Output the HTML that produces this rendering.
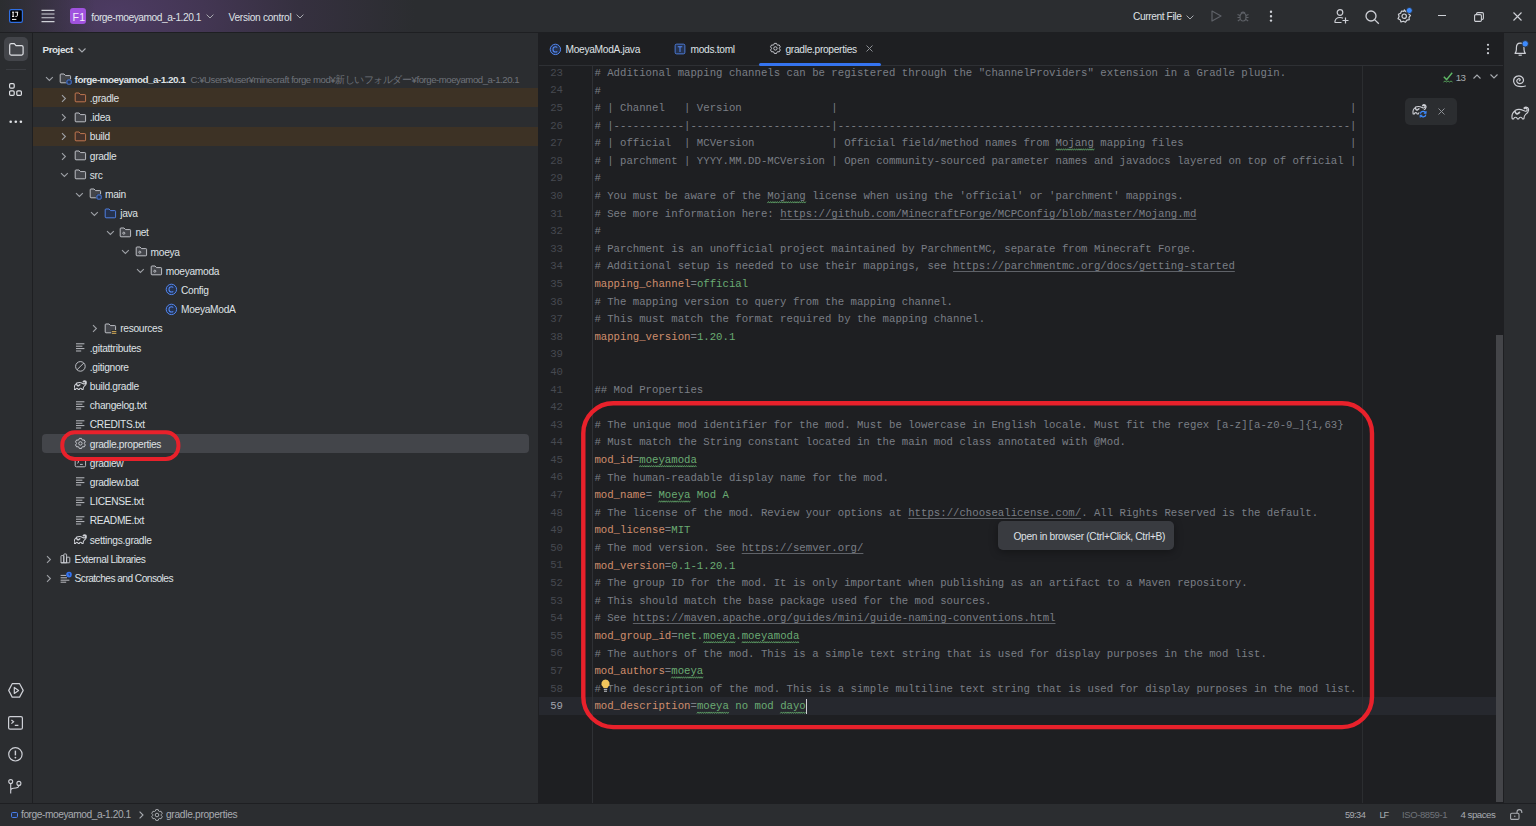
<!DOCTYPE html>
<html><head><meta charset="utf-8">
<style>
*{box-sizing:border-box;margin:0;padding:0}
html,body{width:1536px;height:826px;overflow:hidden;background:#2B2D30}
body{position:relative;font-family:"Liberation Sans",sans-serif;color:#DFE1E5}
.a{position:absolute}
.ui{font-size:10.2px;letter-spacing:-0.3px;white-space:nowrap;line-height:12px}
svg{position:absolute;overflow:visible}
#top{left:0;top:0;width:1536px;height:32px;background:linear-gradient(90deg,#2B2D30 0px,rgba(43,45,48,0) 95px),radial-gradient(ellipse 300px 180px at 115px 14px,#4D3B63 0%,#433653 30%,#35303F 62%,#2B2D30 100%)}
#lstripe{left:0;top:33px;width:33px;height:770px;background:#2B2D30;border-right:1px solid #1E1F22}
#proj{left:33px;top:33px;width:505px;height:770px;background:#2B2D30}
#div1{left:538px;top:32px;width:1px;height:771px;background:#1E1F22}
#editor{left:539px;top:32px;width:965px;height:771px;background:#1E1F22;overflow:hidden}
#rstripe{left:1503px;top:33px;width:33px;height:770px;background:#2B2D30;border-left:1px solid #1E1F22}
#status{left:0;top:803px;width:1536px;height:23px;background:#2B2D30;border-top:1px solid #1E1F22}
.row{position:absolute;left:0;width:505px;height:19.2px}
.code{position:absolute;left:55px;font-family:"Liberation Mono",monospace;font-size:10.68px;line-height:17.6px;white-space:pre;color:#7A7E85}
.ln{position:absolute;left:0;width:24px;text-align:right;font-family:"Liberation Mono",monospace;font-size:10.67px;line-height:17.6px;color:#464950}
.k{color:#CF8E6D}.v{color:#6AAB73}.eq{color:#7A7E85}
.u{text-decoration:underline #5F6268;text-underline-offset:2px;text-decoration-skip-ink:none}
.t{}
</style></head>
<body>
<svg width="0" height="0" style="position:absolute;left:0;top:0"><defs>
<path id="gear" d="M4.20 2.21 L4.80 0.63 L7.20 0.63 L7.80 2.21 L8.38 2.54 L10.05 2.28 L11.25 4.36 L10.19 5.66 L10.19 6.34 L11.25 7.64 L10.05 9.72 L8.38 9.46 L7.80 9.79 L7.20 11.37 L4.80 11.37 L4.20 9.79 L3.62 9.46 L1.95 9.72 L0.75 7.64 L1.81 6.34 L1.81 5.66 L0.75 4.36 L1.95 2.28 L3.62 2.54Z M7.8 6A1.8 1.8 0 1 1 4.2 6A1.8 1.8 0 1 1 7.8 6Z" fill="none" stroke-width="1" stroke-linejoin="round"/>
<path id="fpath" d="M1.5 3.5Q1.5 2.5 2.5 2.5H6.3L8.2 4.5H13.5Q14.5 4.5 14.5 5.5V12.5Q14.5 13.5 13.5 13.5H2.5Q1.5 13.5 1.5 12.5Z" stroke-linejoin="round"/>
<symbol id="i-folder" viewBox="0 0 16 16"><use href="#fpath" fill="#43454A" stroke="#CED0D6" stroke-width="1.1"/></symbol>
<symbol id="i-ofolder" viewBox="0 0 16 16"><use href="#fpath" fill="#45322A" stroke="#D08055" stroke-width="1.1"/></symbol>
<symbol id="i-srcfolder" viewBox="0 0 16 16"><use href="#fpath" fill="#25324D" stroke="#548AF7" stroke-width="1.1"/></symbol>
<symbol id="i-pkg" viewBox="0 0 16 16"><use href="#fpath" fill="#43454A" stroke="#CED0D6" stroke-width="1.1"/><circle cx="6" cy="9" r="1.3" fill="none" stroke="#CED0D6" stroke-width="1"/></symbol>
<symbol id="i-modfolder" viewBox="0 0 16 16"><use href="#fpath" fill="#43454A" stroke="#CED0D6" stroke-width="1.1"/><rect x="9.6" y="9.6" width="6" height="6" rx="1.4" fill="#25324D" stroke="#2B2D30" stroke-width="2"/><rect x="9.9" y="9.9" width="5.4" height="5.4" rx="1.2" fill="#25324D" stroke="#548AF7" stroke-width="1.2"/></symbol>
<symbol id="i-root" viewBox="0 0 16 16"><use href="#fpath" fill="#43454A" stroke="#CED0D6" stroke-width="1.1"/><rect x="9.6" y="9.6" width="6" height="6" rx="1.4" fill="#25324D" stroke="#2B2D30" stroke-width="2"/><rect x="9.9" y="9.9" width="5.4" height="5.4" rx="1.2" fill="#25324D" stroke="#548AF7" stroke-width="1.2"/></symbol>
<symbol id="i-resfolder" viewBox="0 0 16 16"><use href="#fpath" fill="#43454A" stroke="#CED0D6" stroke-width="1.1"/><rect x="9" y="10" width="7" height="6" fill="#2B2D30"/><path d="M9.8 12H15.5M9.8 14.2H15.5" stroke="#D6AE58" stroke-width="1.2"/></symbol>
<symbol id="i-cls" viewBox="0 0 16 16"><circle cx="8" cy="8" r="6.5" fill="#25324D" stroke="#548AF7" stroke-width="1.2"/><path d="M10.3 5.6Q9.5 4.7 8.2 4.7Q5 4.7 5 8Q5 11.3 8.2 11.3Q9.5 11.3 10.3 10.4" fill="none" stroke="#548AF7" stroke-width="1.3"/></symbol>
<symbol id="i-txt" viewBox="0 0 16 16"><path d="M2.5 3.5H13M2.5 6.5H10.5M2.5 9.5H13M2.5 12.5H9" stroke="#CED0D6" stroke-width="1.1"/></symbol>
<symbol id="i-ignore" viewBox="0 0 16 16"><circle cx="8" cy="8" r="6" fill="none" stroke="#CED0D6" stroke-width="1.1"/><path d="M3.8 12.2L12.2 3.8" stroke="#CED0D6" stroke-width="1.1"/></symbol>
<path id="eleph" d="M22.695 4.297a3.807 3.807 0 0 0-5.29-.09.368.368 0 0 0 0 .533l.46.47a.363.363 0 0 0 .474.032 2.182 2.182 0 0 1 2.86 3.291c-3.023 3.020-7.056-5.441-16.211-1.075a1.246 1.246 0 0 0-.528 1.752l1.571 2.713a1.238 1.238 0 0 0 1.681.461l.037-.02-.029.02.688-.384a16.083 16.083 0 0 0 2.193-1.635.384.384 0 0 1 .499-.016.357.357 0 0 1 .016.530 16.435 16.435 0 0 1-2.316 1.741H8.91l-.696.39a1.958 1.958 0 0 1-.963.25 1.987 1.987 0 0 1-1.726-.989L4.04 8.567C1.08 10.667-.748 14.7.23 19.839a.368.368 0 0 0 .363.302h1.67a.368.368 0 0 0 .366-.32 2.498 2.498 0 0 1 4.953 0 .368.368 0 0 0 .364.32h1.63a.368.368 0 0 0 .364-.32 2.498 2.498 0 0 1 4.953 0 .368.368 0 0 0 .363.32h1.62a.368.368 0 0 0 .368-.362c.037-2.286.653-4.910 2.409-6.227 6.085-4.545 4.484-8.440 3.073-9.854z" fill="none" stroke-linejoin="round"/><symbol id="i-gradle" viewBox="-0.5 -0.5 25 25"><use href="#eleph" stroke="#CED0D6" stroke-width="2.1"/></symbol>
<symbol id="i-gear" viewBox="0 0 16 16"><g transform="translate(1 1) scale(1.17)"><use href="#gear" stroke="#CED0D6" stroke-width="0.95"/></g></symbol>
<symbol id="i-term" viewBox="0 0 16 16"><rect x="1.5" y="2.5" width="13" height="11" rx="1.5" fill="none" stroke="#CED0D6" stroke-width="1.1"/><path d="M4 5.5L6.2 7.3L4 9.1M7.5 10.5H11" fill="none" stroke="#CED0D6" stroke-width="1.1"/></symbol>
<symbol id="i-libs" viewBox="0 0 16 16"><path d="M2.5 13.5V5.2Q2.5 4.5 3.2 4.5H5.3Q6 4.5 6 5.2V13.5ZM6 13.5V3.2Q6 2.5 6.7 2.5H8.8Q9.5 2.5 9.5 3.2V13.5ZM9.5 13.5V7.2Q9.5 6.5 10.2 6.5H12.8Q13.5 6.5 13.5 7.2V12.8Q13.5 13.5 12.8 13.5H3.2Q2.5 13.5 2.5 12.8" fill="none" stroke="#CED0D6" stroke-width="1.1" stroke-linejoin="round"/></symbol>
<symbol id="i-scratch" viewBox="0 0 16 16"><path d="M2 5.5H9M2 8.5H10M2 11.5H13M2 14H9" stroke="#CED0D6" stroke-width="1.1"/><circle cx="12.6" cy="4.4" r="3.6" fill="#3574F0"/><path d="M12.6 2.6V4.6L13.8 5.4" fill="none" stroke="#1E1F22" stroke-width="0.9"/></symbol>
<symbol id="i-toml" viewBox="0 0 16 16"><rect x="1.5" y="1.5" width="13" height="13" rx="2" fill="#25324D" stroke="#548AF7" stroke-width="1.1"/><path d="M5 5H11M8 5V12" stroke="#548AF7" stroke-width="1.3"/></symbol>
</defs></svg>
<div id="top" class="a">
 <svg style="left:9px;top:9px" width="14" height="14"><rect x="0.6" y="0.6" width="12.8" height="12.8" rx="1.6" fill="#000" stroke="#2F6FE4" stroke-width="1.2"/><path d="M3 3.2H5.2M4.1 3.2V7.4M3 7.4H5.2M6.2 3.2H9.2M8.4 3.2V6.4Q8.4 7.4 7.4 7.4H6.4M3 10.4H7.4" fill="none" stroke="#fff" stroke-width="1"/></svg>
 <svg style="left:40.5px;top:9px" width="14" height="14"><path d="M0.5 1.4H13.5M0.5 5H13.5M0.5 8.7H13.5M0.5 12.6H13.5" stroke="#CED0D6" stroke-width="1.1"/></svg>
 <div class="a" style="left:70px;top:8px;width:16px;height:16px;border-radius:3px;background:#A052DE"></div>
 <div class="a" style="left:72.6px;top:10.8px;font-size:10.6px;color:#F4EEFA;line-height:12px;letter-spacing:0.2px">F1</div>
 <div class="a ui" style="left:91.3px;top:11.5px;letter-spacing:-0.45px">forge-moeyamod_a-1.20.1</div>
 <svg style="left:206px;top:14px" width="8" height="5"><path d="M0.6 0.6L4 4L7.4 0.6" fill="none" stroke="#A8ABB0" stroke-width="1"/></svg>
 <div class="a ui" style="left:228.5px;top:11.5px;">Version control</div>
 <svg style="left:296px;top:14px" width="8" height="5"><path d="M0.6 0.6L4 4L7.4 0.6" fill="none" stroke="#A8ABB0" stroke-width="1"/></svg>
 <div class="a ui" style="left:1133px;top:11px;letter-spacing:-0.4px">Current File</div>
 <svg style="left:1186px;top:14.5px" width="8" height="5"><path d="M0.6 0.6L4 4L7.4 0.6" fill="none" stroke="#A8ABB0" stroke-width="1"/></svg>
 <svg style="left:1211px;top:10px" width="11" height="12"><path d="M1 1L10 6L1 11Z" fill="none" stroke="#5E6167" stroke-width="1.2" stroke-linejoin="round"/></svg>
 <svg style="left:1237px;top:10px" width="12" height="12"><ellipse cx="6" cy="7" rx="3" ry="4" fill="none" stroke="#5E6167" stroke-width="1.2"/><path d="M4 3.2Q6 1 8 3.2M0.5 4.5L3 5.5M11.5 4.5L9 5.5M0.5 7.5H3M11.5 7.5H9M0.8 11L3 9.5M11.2 11L9 9.5" fill="none" stroke="#5E6167" stroke-width="1.1"/></svg>
 <svg style="left:1268.5px;top:10px" width="4" height="12"><circle cx="2" cy="1.8" r="1.2" fill="#CED0D6"/><circle cx="2" cy="6.2" r="1.2" fill="#CED0D6"/><circle cx="2" cy="10.6" r="1.2" fill="#CED0D6"/></svg>
 <svg style="left:1334px;top:9px" width="15" height="15"><circle cx="6" cy="3.5" r="2.8" fill="none" stroke="#CED0D6" stroke-width="1.2"/><path d="M0.8 13.5Q1 8.5 6 8.5Q8 8.5 9 9.3M0.8 13.5H7.5M11.5 8.5V14.5M8.5 11.5H14.5" fill="none" stroke="#CED0D6" stroke-width="1.2"/></svg>
 <svg style="left:1365px;top:9.5px" width="15" height="15"><circle cx="6" cy="6" r="5" fill="none" stroke="#CED0D6" stroke-width="1.3"/><path d="M9.6 9.6L13.8 13.8" stroke="#CED0D6" stroke-width="1.3"/></svg>
 <svg style="left:1397px;top:9px" width="15" height="15"><path d="M7.3 0.8L8.9 2.6L11.3 2.5L11.6 4.9L13.5 6.4L12 8.3L12.3 10.7L9.9 11.2L8.5 13.2L6.3 12.2L4 13L3.2 10.7L1 9.7L2.1 7.5L1.4 5.2L3.6 4.3L4.6 2L7 2.3Z" fill="none" stroke="#CED0D6" stroke-width="1.2" stroke-linejoin="round"/><circle cx="7.2" cy="7.2" r="2.2" fill="none" stroke="#CED0D6" stroke-width="1.2"/><circle cx="12.3" cy="1.5" r="3" fill="#3D8BFF" stroke="#2B2D30" stroke-width="0.8"/></svg>
 <div class="a" style="left:1437.5px;top:15px;width:8.5px;height:1.2px;background:#CED0D6"></div>
 <svg style="left:1474px;top:11.5px" width="11" height="10"><rect x="0.6" y="2.6" width="6.8" height="6.8" rx="1.2" fill="none" stroke="#CED0D6" stroke-width="1.1"/><path d="M2.6 2.6V1.8Q2.6 0.6 3.8 0.6H8.2Q9.4 0.6 9.4 1.8V6.2Q9.4 7.4 8.2 7.4H7.4" fill="none" stroke="#CED0D6" stroke-width="1.1"/></svg>
 <svg style="left:1512.5px;top:12px" width="9" height="9"><path d="M0.5 0.5L8.5 8.5M8.5 0.5L0.5 8.5" stroke="#CED0D6" stroke-width="1.1"/></svg>
</div>
<div class="a" style="left:0;top:32px;width:1536px;height:1px;background:#1E1F22"></div>
<div id="lstripe" class="a"></div>
<div class="a" style="left:4px;top:37px;width:24px;height:24px;border-radius:5px;background:#43454A"></div>
<svg style="left:8.5px;top:42.5px" width="15" height="13"><path d="M0.7 2.2Q0.7 0.7 2.2 0.7H5.3L7 2.6H12.6Q14.1 2.6 14.1 4.1V10.6Q14.1 12.1 12.6 12.1H2.2Q0.7 12.1 0.7 10.6Z" fill="none" stroke="#DFE1E5" stroke-width="1.2" stroke-linejoin="round"/></svg>
<div class="a" style="left:6px;top:69px;width:20px;height:1px;background:#3A3C41"></div>
<svg style="left:9px;top:83px" width="14" height="14"><rect x="0.6" y="0.6" width="4.6" height="4.6" rx="1.2" fill="none" stroke="#DFE1E5" stroke-width="1.2"/><rect x="0.6" y="7.8" width="4.6" height="4.6" rx="1.2" fill="none" stroke="#DFE1E5" stroke-width="1.2"/><rect x="7.8" y="7.8" width="4.6" height="4.6" rx="1.2" fill="none" stroke="#DFE1E5" stroke-width="1.2"/></svg>
<svg style="left:9px;top:120px" width="14" height="4"><circle cx="1.7" cy="1.7" r="1.3" fill="#DFE1E5"/><circle cx="6.8" cy="1.7" r="1.3" fill="#DFE1E5"/><circle cx="11.9" cy="1.7" r="1.3" fill="#DFE1E5"/></svg>
<svg style="left:7.8px;top:683px" width="16" height="15"><path d="M4.2 0.7H11.6L15.2 7.4L11.6 14.1H4.2L0.7 7.4Z" fill="none" stroke="#CED0D6" stroke-width="1.2" stroke-linejoin="round"/><path d="M6.3 4.4L10.6 7.4L6.3 10.4Z" fill="none" stroke="#CED0D6" stroke-width="1.2" stroke-linejoin="round"/></svg>
<svg style="left:7.8px;top:715.5px" width="15" height="14"><rect x="0.6" y="0.6" width="13.8" height="12.6" rx="1.5" fill="none" stroke="#CED0D6" stroke-width="1.2"/><path d="M3.4 4L5.6 5.8L3.4 7.6M6.8 9.4H10.4" fill="none" stroke="#CED0D6" stroke-width="1.2"/></svg>
<svg style="left:7.8px;top:747px" width="15" height="15"><circle cx="7.4" cy="7.3" r="6.7" fill="none" stroke="#CED0D6" stroke-width="1.2"/><path d="M7.4 3.6V8.4" stroke="#CED0D6" stroke-width="1.4"/><circle cx="7.4" cy="10.6" r="0.9" fill="#CED0D6"/></svg>
<svg style="left:8.4px;top:778.6px" width="14" height="15"><circle cx="2.7" cy="2.6" r="2" fill="none" stroke="#CED0D6" stroke-width="1.1"/><circle cx="10.9" cy="4.4" r="2" fill="none" stroke="#CED0D6" stroke-width="1.1"/><path d="M2.7 4.6V14.6M2.7 11.5Q2.7 9.2 5.5 9.2Q10.9 9.2 10.9 6.4" fill="none" stroke="#CED0D6" stroke-width="1.1"/></svg>
<div id="proj" class="a"></div>
<div class="a ui" style="left:42.5px;top:44px;font-weight:bold;font-size:9.9px;letter-spacing:-0.45px">Project</div>
<svg style="left:77.5px;top:47.5px" width="8" height="5"><path d="M0.5 0.5L4 4L7.5 0.5" fill="none" stroke="#A8ABB0" stroke-width="1.1"/></svg>
<svg style="left:44.8px;top:76.3px" width="9" height="6"><path d="M1 1.1L4.4 4.5L7.8 1.1" fill="none" stroke="#9EA1A6" stroke-width="1.1"/></svg>
<svg style="left:58.5px;top:72.1px" width="12.8" height="12.8" viewBox="0 0 16 16"><use href="#i-root"/></svg>
<div class="a ui" style="left:74.6px;top:73.8px;font-weight:bold;letter-spacing:-0.48px;font-size:9.9px;">forge-moeyamod_a-1.20.1</div>
<div class="a ui" style="left:190.5px;top:73.8px;color:#6F737A;font-size:9.6px;letter-spacing:-0.45px">C:¥Users¥user¥minecraft forge mod¥新しいフォルダー¥forge-moeyamod_a-1.20.1</div>
<div class="a" style="left:33px;top:88.1px;width:505px;height:19.2px;background:#3D3225"></div>
<svg style="left:61.2px;top:94.0px" width="6" height="9"><path d="M1 1.1L4.4 4.5L1 7.9" fill="none" stroke="#9EA1A6" stroke-width="1.1"/></svg>
<svg style="left:73.7px;top:91.3px" width="12.8" height="12.8" viewBox="0 0 16 16"><use href="#i-ofolder"/></svg>
<div class="a ui" style="left:89.8px;top:93.0px;">.gradle</div>
<svg style="left:61.2px;top:113.2px" width="6" height="9"><path d="M1 1.1L4.4 4.5L1 7.9" fill="none" stroke="#9EA1A6" stroke-width="1.1"/></svg>
<svg style="left:73.7px;top:110.5px" width="12.8" height="12.8" viewBox="0 0 16 16"><use href="#i-folder"/></svg>
<div class="a ui" style="left:89.8px;top:112.2px;">.idea</div>
<div class="a" style="left:33px;top:126.5px;width:505px;height:19.2px;background:#3D3225"></div>
<svg style="left:61.2px;top:132.4px" width="6" height="9"><path d="M1 1.1L4.4 4.5L1 7.9" fill="none" stroke="#9EA1A6" stroke-width="1.1"/></svg>
<svg style="left:73.7px;top:129.7px" width="12.8" height="12.8" viewBox="0 0 16 16"><use href="#i-ofolder"/></svg>
<div class="a ui" style="left:89.8px;top:131.4px;">build</div>
<svg style="left:61.2px;top:151.6px" width="6" height="9"><path d="M1 1.1L4.4 4.5L1 7.9" fill="none" stroke="#9EA1A6" stroke-width="1.1"/></svg>
<svg style="left:73.7px;top:148.9px" width="12.8" height="12.8" viewBox="0 0 16 16"><use href="#i-folder"/></svg>
<div class="a ui" style="left:89.8px;top:150.6px;">gradle</div>
<svg style="left:60.0px;top:172.3px" width="9" height="6"><path d="M1 1.1L4.4 4.5L7.8 1.1" fill="none" stroke="#9EA1A6" stroke-width="1.1"/></svg>
<svg style="left:73.7px;top:168.1px" width="12.8" height="12.8" viewBox="0 0 16 16"><use href="#i-folder"/></svg>
<div class="a ui" style="left:89.8px;top:169.8px;">src</div>
<svg style="left:75.2px;top:191.5px" width="9" height="6"><path d="M1 1.1L4.4 4.5L7.8 1.1" fill="none" stroke="#9EA1A6" stroke-width="1.1"/></svg>
<svg style="left:88.9px;top:187.3px" width="12.8" height="12.8" viewBox="0 0 16 16"><use href="#i-modfolder"/></svg>
<div class="a ui" style="left:105.0px;top:189.0px;">main</div>
<svg style="left:90.4px;top:210.7px" width="9" height="6"><path d="M1 1.1L4.4 4.5L7.8 1.1" fill="none" stroke="#9EA1A6" stroke-width="1.1"/></svg>
<svg style="left:104.1px;top:206.5px" width="12.8" height="12.8" viewBox="0 0 16 16"><use href="#i-srcfolder"/></svg>
<div class="a ui" style="left:120.2px;top:208.2px;">java</div>
<svg style="left:105.6px;top:229.9px" width="9" height="6"><path d="M1 1.1L4.4 4.5L7.8 1.1" fill="none" stroke="#9EA1A6" stroke-width="1.1"/></svg>
<svg style="left:119.3px;top:225.7px" width="12.8" height="12.8" viewBox="0 0 16 16"><use href="#i-pkg"/></svg>
<div class="a ui" style="left:135.4px;top:227.4px;">net</div>
<svg style="left:120.8px;top:249.1px" width="9" height="6"><path d="M1 1.1L4.4 4.5L7.8 1.1" fill="none" stroke="#9EA1A6" stroke-width="1.1"/></svg>
<svg style="left:134.5px;top:244.9px" width="12.8" height="12.8" viewBox="0 0 16 16"><use href="#i-pkg"/></svg>
<div class="a ui" style="left:150.6px;top:246.6px;">moeya</div>
<svg style="left:136.0px;top:268.3px" width="9" height="6"><path d="M1 1.1L4.4 4.5L7.8 1.1" fill="none" stroke="#9EA1A6" stroke-width="1.1"/></svg>
<svg style="left:149.7px;top:264.1px" width="12.8" height="12.8" viewBox="0 0 16 16"><use href="#i-pkg"/></svg>
<div class="a ui" style="left:165.8px;top:265.8px;">moeyamoda</div>
<svg style="left:164.9px;top:283.3px" width="12.8" height="12.8" viewBox="0 0 16 16"><use href="#i-cls"/></svg>
<div class="a ui" style="left:181.0px;top:285.0px;">Config</div>
<svg style="left:164.9px;top:302.5px" width="12.8" height="12.8" viewBox="0 0 16 16"><use href="#i-cls"/></svg>
<div class="a ui" style="left:181.0px;top:304.2px;">MoeyaModA</div>
<svg style="left:91.6px;top:324.4px" width="6" height="9"><path d="M1 1.1L4.4 4.5L1 7.9" fill="none" stroke="#9EA1A6" stroke-width="1.1"/></svg>
<svg style="left:104.1px;top:321.7px" width="12.8" height="12.8" viewBox="0 0 16 16"><use href="#i-resfolder"/></svg>
<div class="a ui" style="left:120.2px;top:323.4px;">resources</div>
<svg style="left:73.7px;top:340.9px" width="12.8" height="12.8" viewBox="0 0 16 16"><use href="#i-txt"/></svg>
<div class="a ui" style="left:89.8px;top:342.6px;">.gitattributes</div>
<svg style="left:73.7px;top:360.1px" width="12.8" height="12.8" viewBox="0 0 16 16"><use href="#i-ignore"/></svg>
<div class="a ui" style="left:89.8px;top:361.8px;">.gitignore</div>
<svg style="left:73.7px;top:379.3px" width="12.8" height="12.8" viewBox="0 0 16 16"><use href="#i-gradle"/></svg>
<div class="a ui" style="left:89.8px;top:381.0px;">build.gradle</div>
<svg style="left:73.7px;top:398.5px" width="12.8" height="12.8" viewBox="0 0 16 16"><use href="#i-txt"/></svg>
<div class="a ui" style="left:89.8px;top:400.2px;">changelog.txt</div>
<svg style="left:73.7px;top:417.7px" width="12.8" height="12.8" viewBox="0 0 16 16"><use href="#i-txt"/></svg>
<div class="a ui" style="left:89.8px;top:419.4px;">CREDITS.txt</div>
<div class="a" style="left:42px;top:434.3px;width:487px;height:18.6px;border-radius:4px;background:#43454A"></div>
<svg style="left:73.7px;top:436.9px" width="12.8" height="12.8" viewBox="0 0 16 16"><use href="#i-gear"/></svg>
<div class="a ui" style="left:89.8px;top:438.6px;">gradle.properties</div>
<svg style="left:73.7px;top:456.1px" width="12.8" height="12.8" viewBox="0 0 16 16"><use href="#i-term"/></svg>
<div class="a ui" style="left:89.8px;top:457.8px;">gradlew</div>
<svg style="left:73.7px;top:475.3px" width="12.8" height="12.8" viewBox="0 0 16 16"><use href="#i-txt"/></svg>
<div class="a ui" style="left:89.8px;top:477.0px;">gradlew.bat</div>
<svg style="left:73.7px;top:494.5px" width="12.8" height="12.8" viewBox="0 0 16 16"><use href="#i-txt"/></svg>
<div class="a ui" style="left:89.8px;top:496.2px;">LICENSE.txt</div>
<svg style="left:73.7px;top:513.7px" width="12.8" height="12.8" viewBox="0 0 16 16"><use href="#i-txt"/></svg>
<div class="a ui" style="left:89.8px;top:515.4px;">README.txt</div>
<svg style="left:73.7px;top:532.9px" width="12.8" height="12.8" viewBox="0 0 16 16"><use href="#i-gradle"/></svg>
<div class="a ui" style="left:89.8px;top:534.6px;">settings.gradle</div>
<svg style="left:46.0px;top:554.8px" width="6" height="9"><path d="M1 1.1L4.4 4.5L1 7.9" fill="none" stroke="#9EA1A6" stroke-width="1.1"/></svg>
<svg style="left:58.5px;top:552.1px" width="12.8" height="12.8" viewBox="0 0 16 16"><use href="#i-libs"/></svg>
<div class="a ui" style="left:74.6px;top:553.8px;letter-spacing:-0.47px;">External Libraries</div>
<svg style="left:46.0px;top:574.0px" width="6" height="9"><path d="M1 1.1L4.4 4.5L1 7.9" fill="none" stroke="#9EA1A6" stroke-width="1.1"/></svg>
<svg style="left:58.5px;top:571.3px" width="12.8" height="12.8" viewBox="0 0 16 16"><use href="#i-scratch"/></svg>
<div class="a ui" style="left:74.6px;top:573.0px;letter-spacing:-0.55px;">Scratches and Consoles</div>
<div id="div1" class="a"></div>
<div id="editor" class="a"></div>
<div class="a" style="left:539px;top:65px;width:964px;height:1px;background:#2E3034"></div>
<svg style="left:548.5px;top:42.9px" width="12.8" height="12.8" viewBox="0 0 16 16"><use href="#i-cls"/></svg>
<div class="a ui" style="left:565.5px;top:44px">MoeyaModA.java</div>
<svg style="left:674px;top:42.9px" width="12" height="12" viewBox="0 0 16 16"><use href="#i-toml"/></svg>
<div class="a ui" style="left:690.5px;top:44px">mods.toml</div>
<svg style="left:768.5px;top:42.3px" width="12.8" height="12.8" viewBox="0 0 16 16"><use href="#i-gear"/></svg>
<div class="a ui" style="left:785.5px;top:44px">gradle.properties</div>
<svg style="left:865.5px;top:45px" width="7" height="7"><path d="M0.5 0.5L6.5 6.5M6.5 0.5L0.5 6.5" stroke="#8C8F94" stroke-width="1"/></svg>
<div class="a" style="left:759.3px;top:62.5px;width:122px;height:3.2px;border-radius:2px;background:#3574F0"></div>
<svg style="left:1485.5px;top:42.5px" width="4" height="12"><circle cx="2" cy="1.8" r="1.1" fill="#CED0D6"/><circle cx="2" cy="6" r="1.1" fill="#CED0D6"/><circle cx="2" cy="10.2" r="1.1" fill="#CED0D6"/></svg>
<div class="a" style="left:539px;top:66px;width:964px;height:737px;overflow:hidden">
 <div class="a" style="left:0;top:631.2px;width:964px;height:17.6px;background:#26282E"></div>
 <div class="a" style="left:53px;top:0;width:1px;height:737px;background:#2F3135"></div>
 <div class="a" style="left:823px;top:0;width:1px;height:737px;background:#2B2D30"></div>
 <div class="ln" style="top:-1.2px;"><pre style="font:inherit">23
24
25
26
27
28
29
30
31
32
33
34
35
36
37
38
39
40
41
42
43
44
45
46
47
48
49
50
51
52
53
54
55
56
57
58</pre></div>
 <div class="ln" style="top:632.4px;color:#A1A3AB">59</div>
 <div class="code" style="top:-1.1px;left:55.4px"># Additional mapping channels can be registered through the "channelProviders" extension in a Gradle plugin.
#
# | Channel   | Version              |                                                                                |
# |-----------|----------------------|--------------------------------------------------------------------------------|
# | official  | MCVersion            | Official field/method names from <span class="t">Mojang</span> mapping files                          |
# | parchment | YYYY.MM.DD-MCVersion | Open community-sourced parameter names and javadocs layered on top of official |
#
# You must be aware of the <span class="t">Mojang</span> license when using the 'official' or 'parchment' mappings.
# See more information here: <span class="u">https://github.com/MinecraftForge/MCPConfig/blob/master/Mojang.md</span>
#
# Parchment is an unofficial project maintained by ParchmentMC, separate from Minecraft Forge.
# Additional setup is needed to use their mappings, see <span class="u">https://parchmentmc.org/docs/getting-started</span>
<span class="k">mapping_channel</span><span class="eq">=</span><span class="v">official</span>
# The mapping version to query from the mapping channel.
# This must match the format required by the mapping channel.
<span class="k">mapping_version</span><span class="eq">=</span><span class="v">1.20.1</span>


## Mod Properties

# The unique mod identifier for the mod. Must be lowercase in English locale. Must fit the regex [a-z][a-z0-9_]{1,63}
# Must match the String constant located in the main mod class annotated with @Mod.
<span class="k">mod_id</span><span class="eq">=</span><span class="v"><span class="t">moeyamoda</span></span>
# The human-readable display name for the mod.
<span class="k">mod_name</span><span class="eq">=</span><span class="v"> <span class="t">Moeya</span> Mod A</span>
# The license of the mod. Review your options at <span class="u">https://choosealicense.com/</span>. All Rights Reserved is the default.
<span class="k">mod_license</span><span class="eq">=</span><span class="v">MIT</span>
# The mod version. See <span class="u">https://semver.org/</span>
<span class="k">mod_version</span><span class="eq">=</span><span class="v">0.1-1.20.1</span>
# The group ID for the mod. It is only important when publishing as an artifact to a Maven repository.
# This should match the base package used for the mod sources.
# See <span class="u">https://maven.apache.org/guides/mini/guide-naming-conventions.html</span>
<span class="k">mod_group_id</span><span class="eq">=</span><span class="v">net.<span class="t">moeya</span>.<span class="t">moeyamoda</span></span>
# The authors of the mod. This is a simple text string that is used for display purposes in the mod list.
<span class="k">mod_authors</span><span class="eq">=</span><span class="v"><span class="t">moeya</span></span>
# The description of the mod. This is a simple multiline text string that is used for display purposes in the mod list.
<span class="k">mod_description</span><span class="eq">=</span><span class="v"><span class="t">moeya</span> no mod <span class="t">dayo</span></span></div>
 <div class="a" style="left:957px;top:269px;width:6.5px;height:466.5px;background:#444549;border-radius:0"></div>
</div>
<svg style="left:1442.5px;top:71.5px" width="10" height="11"><path d="M0.8 4.8L3.6 7.6L9.2 0.8" fill="none" stroke="#5FB865" stroke-width="1.4"/><path d="M0.5 10L2 9L3.5 10L5 9L6.5 10L8 9L9.5 10" fill="none" stroke="#5FB865" stroke-width="0.8"/></svg>
<div class="a ui" style="left:1455.8px;top:71.5px;color:#A8ABB0;font-size:9.8px;letter-spacing:-0.7px">13</div>
<svg style="left:1473px;top:73.5px" width="8" height="5"><path d="M0.5 4.5L4 1L7.5 4.5" fill="none" stroke="#A8ABB0" stroke-width="1.1"/></svg>
<svg style="left:1490px;top:73.5px" width="8" height="5"><path d="M0.5 0.5L4 4L7.5 0.5" fill="none" stroke="#A8ABB0" stroke-width="1.1"/></svg>
<div class="a" style="left:1404.5px;top:98px;width:52px;height:26.5px;border-radius:5px;background:#2B2D30"></div>
<svg style="left:1413.3px;top:103px" width="13.1" height="13.1" viewBox="0 0 24 24"><use href="#eleph" stroke="#CED0D6" stroke-width="2"/><circle cx="18.5" cy="20.5" r="7.6" fill="#2B2D30"/><path d="M13.4 19.6A5.2 5.2 0 0 1 23.2 18.4M23.6 21.4A5.2 5.2 0 0 1 13.8 22.6" fill="none" stroke="#3D8BFF" stroke-width="2.4"/><path d="M23.8 14.6V18.6H19.8M13.2 26.4V22.4H17.2" fill="none" stroke="#3D8BFF" stroke-width="2"/></svg>
<svg style="left:1438px;top:108px" width="7" height="7"><path d="M0.5 0.5L6.5 6.5M6.5 0.5L0.5 6.5" stroke="#8C8F94" stroke-width="1"/></svg>
<div class="a" style="left:998px;top:521.3px;width:176px;height:28.6px;border-radius:5px;background:#393B40;box-shadow:0 2px 8px rgba(0,0,0,0.35)"></div>
<div class="a ui" style="left:1013.5px;top:530.5px">Open in browser (Ctrl+Click, Ctrl+B)</div>
<svg style="left:600px;top:679.3px" width="11" height="14"><path d="M5.5 0.6A4.1 4.1 0 0 1 8.2 7.8L7.4 9H3.6L2.8 7.8A4.1 4.1 0 0 1 5.5 0.6Z" fill="#F2C55C"/><path d="M3.8 10.3H7.2M4 12.2H7" stroke="#CED0D6" stroke-width="1"/></svg>
<div class="a" style="left:805.5px;top:698.5px;width:1.2px;height:15px;background:#CED0D6"></div>
<svg style="left:0;top:0" width="1536" height="826"><path d="M1055.8 150.2L1056.9 148.75L1058.0 150.25L1059.1 148.75L1060.2 150.25L1061.3 148.75L1062.4 150.25L1063.5 148.75L1064.6 150.25L1065.7 148.75L1066.8 150.25L1067.9 148.75L1069.0 150.25L1070.1 148.75L1071.2 150.25L1072.3 148.75L1073.4 150.25L1074.5 148.75L1075.6 150.25L1076.7 148.75L1077.8 150.25L1078.9 148.75L1080.0 150.25L1081.1 148.75L1082.2 150.25L1083.3 148.75L1084.4 150.25L1085.5 148.75L1086.6 150.25L1087.7 148.75L1088.8 150.25L1089.9 148.75L1091.0 150.25L1092.1 148.75L1093.2 150.25L1094.3 148.75M767.4 203.1L768.5 201.55L769.6 203.05L770.7 201.55L771.8 203.05L772.9 201.55L774.0 203.05L775.1 201.55L776.2 203.05L777.3 201.55L778.4 203.05L779.5 201.55L780.6 203.05L781.7 201.55L782.8 203.05L783.9 201.55L785.0 203.05L786.1 201.55L787.2 203.05L788.3 201.55L789.4 203.05L790.5 201.55L791.6 203.05L792.7 201.55L793.8 203.05L794.9 201.55L796.0 203.05L797.1 201.55L798.2 203.05L799.3 201.55L800.4 203.05L801.5 201.55L802.6 203.05L803.7 201.55L804.8 203.05L805.9 201.55M639.3 467.1L640.4 465.55L641.5 467.05L642.6 465.55L643.7 467.05L644.8 465.55L645.9 467.05L647.0 465.55L648.1 467.05L649.2 465.55L650.3 467.05L651.4 465.55L652.5 467.05L653.6 465.55L654.7 467.05L655.8 465.55L656.9 467.05L658.0 465.55L659.1 467.05L660.2 465.55L661.3 467.05L662.4 465.55L663.5 467.05L664.6 465.55L665.7 467.05L666.8 465.55L667.9 467.05L669.0 465.55L670.1 467.05L671.2 465.55L672.3 467.05L673.4 465.55L674.5 467.05L675.6 465.55L676.7 467.05L677.8 465.55L678.9 467.05L680.0 465.55L681.1 467.05L682.2 465.55L683.3 467.05L684.4 465.55L685.5 467.05L686.6 465.55L687.7 467.05L688.8 465.55L689.9 467.05L691.0 465.55L692.1 467.05L693.2 465.55L694.3 467.05L695.4 465.55L696.5 467.05M658.5 502.3L659.6 500.75L660.7 502.25L661.8 500.75L662.9 502.25L664.0 500.75L665.1 502.25L666.2 500.75L667.3 502.25L668.4 500.75L669.5 502.25L670.6 500.75L671.7 502.25L672.8 500.75L673.9 502.25L675.0 500.75L676.1 502.25L677.2 500.75L678.3 502.25L679.4 500.75L680.5 502.25L681.6 500.75L682.7 502.25L683.8 500.75L684.9 502.25L686.0 500.75L687.1 502.25L688.2 500.75L689.3 502.25L690.4 500.75M703.4 643.1L704.5 641.55L705.6 643.05L706.7 641.55L707.8 643.05L708.9 641.55L710.0 643.05L711.1 641.55L712.2 643.05L713.3 641.55L714.4 643.05L715.5 641.55L716.6 643.05L717.7 641.55L718.8 643.05L719.9 641.55L721.0 643.05L722.1 641.55L723.2 643.05L724.3 641.55L725.4 643.05L726.5 641.55L727.6 643.05L728.7 641.55L729.8 643.05L730.9 641.55L732.0 643.05L733.1 641.55L734.2 643.05L735.3 641.55M741.8 643.1L742.9 641.55L744.0 643.05L745.1 641.55L746.2 643.05L747.3 641.55L748.4 643.05L749.5 641.55L750.6 643.05L751.7 641.55L752.8 643.05L753.9 641.55L755.0 643.05L756.1 641.55L757.2 643.05L758.3 641.55L759.4 643.05L760.5 641.55L761.6 643.05L762.7 641.55L763.8 643.05L764.9 641.55L766.0 643.05L767.1 641.55L768.2 643.05L769.3 641.55L770.4 643.05L771.5 641.55L772.6 643.05L773.7 641.55L774.8 643.05L775.9 641.55L777.0 643.05L778.1 641.55L779.2 643.05L780.3 641.55L781.4 643.05L782.5 641.55L783.6 643.05L784.7 641.55L785.8 643.05L786.9 641.55L788.0 643.05L789.1 641.55L790.2 643.05L791.3 641.55L792.4 643.05L793.5 641.55L794.6 643.05L795.7 641.55L796.8 643.05L797.9 641.55L799.0 643.05M671.3 678.3L672.4 676.75L673.5 678.25L674.6 676.75L675.7 678.25L676.8 676.75L677.9 678.25L679.0 676.75L680.1 678.25L681.2 676.75L682.3 678.25L683.4 676.75L684.5 678.25L685.6 676.75L686.7 678.25L687.8 676.75L688.9 678.25L690.0 676.75L691.1 678.25L692.2 676.75L693.3 678.25L694.4 676.75L695.5 678.25L696.6 676.75L697.7 678.25L698.8 676.75L699.9 678.25L701.0 676.75L702.1 678.25L703.2 676.75M696.9 713.5L698.0 711.95L699.1 713.45L700.2 711.95L701.3 713.45L702.4 711.95L703.5 713.45L704.6 711.95L705.7 713.45L706.8 711.95L707.9 713.45L709.0 711.95L710.1 713.45L711.2 711.95L712.3 713.45L713.4 711.95L714.5 713.45L715.6 711.95L716.7 713.45L717.8 711.95L718.9 713.45L720.0 711.95L721.1 713.45L722.2 711.95L723.3 713.45L724.4 711.95L725.5 713.45L726.6 711.95L727.7 713.45L728.8 711.95M780.3 713.5L781.4 711.95L782.5 713.45L783.6 711.95L784.7 713.45L785.8 711.95L786.9 713.45L788.0 711.95L789.1 713.45L790.2 711.95L791.3 713.45L792.4 711.95L793.5 713.45L794.6 711.95L795.7 713.45L796.8 711.95L797.9 713.45L799.0 711.95L800.1 713.45L801.2 711.95L802.3 713.45L803.4 711.95L804.5 713.45L805.6 711.95" fill="none" stroke="#62A86A" stroke-width="0.85" stroke-linejoin="round"/></svg>
<svg style="left:0;top:0" width="1536" height="826"><rect x="583.3" y="403.2" width="788.7" height="323.9" rx="30" fill="none" stroke="#E8212B" stroke-width="4.4"/><rect x="62.3" y="432.2" width="116.1" height="26.8" rx="12.5" fill="none" stroke="#E8212B" stroke-width="4"/></svg>
<div id="rstripe" class="a"></div>
<svg style="left:1513px;top:41px" width="16" height="16"><path d="M2 12.3H12.4Q11 10.8 11 8.6V6.8Q11 2.2 7.2 2.2Q3.4 2.2 3.4 6.8V8.6Q3.4 10.8 2 12.3Z" fill="none" stroke="#CED0D6" stroke-width="1.2" stroke-linejoin="round"/><path d="M5.6 14.2H8.8" stroke="#CED0D6" stroke-width="1.2"/><circle cx="12.2" cy="2.8" r="3.2" fill="#3D8BFF" stroke="#2B2D30" stroke-width="0.8"/></svg>
<svg style="left:1513px;top:74px" width="14" height="14"><path d="M6.4 6.8Q7.6 6.2 7 5.2Q6 4.2 4.6 5.4Q3 7 4.6 8.8Q6.6 10.6 9.2 8.8Q11.6 6.6 9.6 3.6Q7.2 0.8 3.4 2.4Q0 4.2 0.8 8.2Q1.8 12 6 12.4Q9.4 12.8 12.4 12" fill="none" stroke="#CED0D6" stroke-width="1.2" stroke-linecap="round"/></svg>
<svg style="left:1511.6px;top:104.6px" width="16.6" height="16.6" viewBox="0 0 24 24"><use href="#eleph" stroke="#CED0D6" stroke-width="1.65"/></svg>
<div id="status" class="a"></div>
<div class="a" style="left:11px;top:811.6px;width:6.8px;height:6.6px;border-radius:1.6px;border:1.4px solid #4A7FE8;background:#25324D"></div>
<div class="a ui" style="left:21px;top:808.5px;color:#A8ABB0;letter-spacing:-0.45px">forge-moeyamod_a-1.20.1</div>
<svg style="left:139px;top:810.5px" width="5" height="8"><path d="M0.6 0.6L4 4L0.6 7.4" fill="none" stroke="#A8ABB0" stroke-width="1.1"/></svg>
<svg style="left:151px;top:808.5px" width="12" height="12"><use href="#gear" stroke="#A8ABB0"/></svg>
<div class="a ui" style="left:166px;top:808.5px;color:#A8ABB0">gradle.properties</div>
<div class="a ui" style="left:1345px;top:809px;color:#A8ABB0;font-size:9.2px;letter-spacing:-0.55px">59:34</div>
<div class="a ui" style="left:1379.5px;top:809px;color:#A8ABB0;font-size:9.2px;letter-spacing:-1px">LF</div>
<div class="a ui" style="left:1402px;top:808.8px;color:#6F737A;font-size:9.5px;letter-spacing:-0.4px">ISO-8859-1</div>
<div class="a ui" style="left:1460.5px;top:808.8px;color:#A8ABB0;font-size:9.7px;letter-spacing:-0.5px">4 spaces</div>
<svg style="left:1510px;top:809px" width="13" height="11"><rect x="0.6" y="4.2" width="8.4" height="6.2" rx="1.2" fill="none" stroke="#A8ABB0" stroke-width="1.1"/><path d="M7 4.2V3Q7 0.6 9.4 0.6Q11.8 0.6 11.8 3V4" fill="none" stroke="#A8ABB0" stroke-width="1.1"/><circle cx="4.8" cy="7.3" r="0.7" fill="#A8ABB0"/></svg>
</body></html>
